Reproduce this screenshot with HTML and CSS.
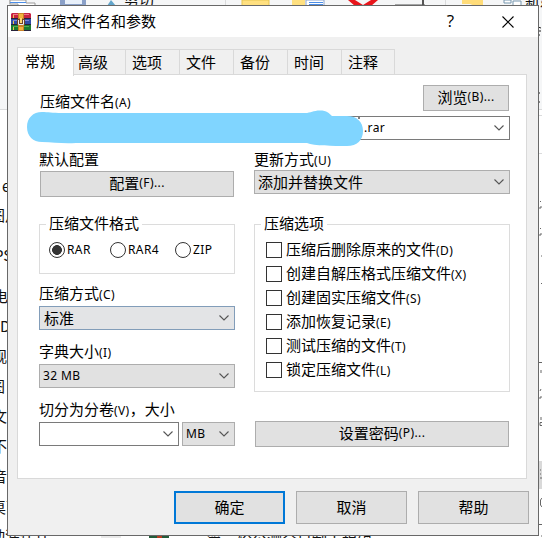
FILE: index.html
```html
<!DOCTYPE html>
<html lang="zh-CN">
<head>
<meta charset="utf-8">
<title>压缩文件名和参数</title>
<link rel="stylesheet" href="styles.css">
</head>
<body>
<svg class="desktop" width="542" height="538" viewBox="0 0 542 538">
  <rect width="542" height="538" fill="#fff"/>
  <rect width="542" height="109" fill="#f5f6f7"/>
  <path d="M0 109.500H8M538 109.500H542M538 115.500H542M538 153.500H542" stroke="#dadbdc"/>
  <path d="M9.500 0V6M225.500 0V6M445.500 0V6" stroke="#dadbdc"/>
  <path d="M10 0H26V3H35V6H18V4H10Z" fill="#fff" stroke="#999"/>
  <path d="M10 2.500H26" stroke="#4b8ee8"/>
  <path d="M60 0H86V6H60Z" fill="#8aa0c8"/><path d="M65 0H82V4H65Z" fill="#e8f0fa"/>
  <path d="M111 0L107 6H116Z" fill="#62a5cb"/>
  <path d="M242 0H269V6H242Z" fill="#ffe080" stroke="#e8c550"/>
  <path d="M292 0H305V6H292Z" fill="#ffe080"/><path d="M306 0H324V6H306Z" fill="#fff" stroke="#8aa4cf"/><path d="M309 2.500H323M309 4.500H323" stroke="#4b8ee8"/>
  <path d="M348 0L355 6H371L378 0H371L363 5L355 0Z" fill="#e8151b"/>
  <path d="M423 0V5M395 5.500H425" stroke="#555" stroke-width="2"/>
  <path d="M462 0H483V6H475L470 4H462Z" fill="#ffdc79"/>
  <path d="M504 0H511V3H504ZM513 1H521V6H513Z" fill="#fff" stroke="#7797af"/>
  <g class="behind">
    <text x="124" y="5">剪切</text><text x="525" y="6">新建</text>
    <text x="2" y="192">e</text><text x="-10" y="221">图片</text><text x="-6" y="261">PS</text>
    <text x="-7" y="302">电</text><text x="0" y="332">D</text><text x="-8" y="362">观</text>
    <text x="-10" y="392">图</text><text x="-8" y="422">文</text><text x="-8" y="452">不</text>
    <text x="-8" y="482">音</text><text x="-9" y="513">桌面</text><text x="-10" y="542">动漏作计</text>
    <text x="207" y="545">第二轮公测全日制工程硕</text>
  </g>
  <path d="M101 536H121V538H101Z" fill="#e9e9e9"/>
  <path d="M149 535H169V538H149Z" fill="#235b39"/><path d="M157 535H162V538H157Z" fill="#b93c21"/>
  <path d="M539 461H542V489H539Z" fill="#d9d9d9"/>
  <path d="M539 362.500H542M539 524.500H542" stroke="#666"/>
  <path d="M541 201L540 202M540 209V207H542M541 228L540 229M540 236V234H542M541 256H542M541 283.500H542M541 370V373M541 389L540 391M540 399V397H542M541 417V420M542 422.500H540V425.500H542M541 470H540M541 474H540M540 478H542M542 498L540.500 500V505L542 507M542 536H541" fill="none" stroke="#666"/>
  <path d="M538 27L541 28M539 31H541M539 35H540M538 93H540M538 102H540M8 43H7M8 50H7" stroke="#222"/>
</svg>

<main class="dialog">
  <header class="titlebar">
    <svg class="logo" width="20" height="18" viewBox="0 0 20 18">
      <path d="M0 1L1 0H19L20 1V6H0Z" fill="#c62342"/><path d="M0 6H20V12H0Z" fill="#304da6"/><path d="M0 12H20V17L19 18H1L0 17Z" fill="#1b7b30"/>
      <path d="M0 5.500H20M0 11.500H20M0 17.500H20" stroke="#27233b"/>
      <path d="M2 1.500H18" stroke="#ef738a"/><path d="M2 7.500H18" stroke="#7d86da"/><path d="M2 13.500H18" stroke="#50ae50"/>
      <path d="M2.500 2V5M2.500 8V11M2.500 14V17" stroke="#ecc34b"/>
      <path d="M7 0H13V18H7Z" fill="#c98226"/><path d="M8 1H12V5H8ZM8 14H12V17H8Z" fill="#f4b33e"/>
      <path d="M6 6H14V12H6Z" fill="#6d4429"/><path d="M7.500 7V11.500H12.500V7" fill="none" stroke="#eee"/><path d="M10 5V10" stroke="#ffd66c" stroke-width="2"/>
    </svg>
    <h1>压缩文件名和参数</h1>
    <span class="help">?</span>
    <svg class="close" width="12" height="12" viewBox="0 0 12 12"><path d="M.5.5L11.500 11.500M11.500.5L.5 11.500" stroke="#000" stroke-width="1.100"/></svg>
  </header>
  <nav class="tabs">
    <span class="tab active">常规</span><span class="tab first">高级</span><span class="tab">选项</span><span class="tab">文件</span><span class="tab">备份</span><span class="tab">时间</span><span class="tab last">注释</span>
  </nav>
  <section class="panel">
    <div class="name-row"><span>压缩文件名<small>(A)</small></span><button class="browse">浏览<small>(B)...</small></button></div>
    <div class="combo name-combo"><small>.rar</small><svg class="chev" width="10" height="6" viewBox="0 0 10 6"><path d="M.5.5L5 5L9.500.5"/></svg>
      <svg class="scribble" width="340" height="40" viewBox="25 108 340 40"><path d="M359 117V119" stroke="#000"/><path d="M42 112C48 112 52 113 62 113H305C311 113 313 110.500 320 110.500C327 110.500 329 113 332 116H347C357 116 363 122 363 131C363 140 357 146 347 146C333 146 314 146 307 143H76C62 144 54 142 42 142C33 142 27 136 27 127C27 118 33 112 42 112Z" fill="#80d5ff"/></svg>
    </div>
    <div class="columns">
      <div class="left">
        <label class="label">默认配置</label>
        <button class="profile">配置<small>(F)...</small></button>
        <fieldset class="formats"><legend>压缩文件格式</legend>
          <div class="radios">
            <label><i class="radio on"></i><small>RAR</small></label>
            <label><i class="radio"></i><small>RAR4</small></label>
            <label><i class="radio"></i><small>ZIP</small></label>
          </div>
        </fieldset>
        <label class="label method">压缩方式<small>(C)</small></label>
        <div class="combo grey focus">标准<svg class="chev" width="10" height="6" viewBox="0 0 10 6"><path d="M.5.5L5 5L9.500.5"/></svg></div>
        <label class="label dict">字典大小<small>(I)</small></label>
        <div class="combo grey"><small>32 MB</small><svg class="chev" width="10" height="6" viewBox="0 0 10 6"><path d="M.5.5L5 5L9.500.5"/></svg></div>
        <label class="label split">切分为分卷<small>(V)</small>，大小</label>
        <div class="volume">
          <div class="combo size"><svg class="chev" width="10" height="6" viewBox="0 0 10 6"><path d="M.5.5L5 5L9.500.5"/></svg></div>
          <div class="combo grey unit"><small>MB</small><svg class="chev" width="10" height="6" viewBox="0 0 10 6"><path d="M.5.5L5 5L9.500.5"/></svg></div>
        </div>
      </div>
      <div class="right">
        <label class="label">更新方式<small>(U)</small></label>
        <div class="combo grey update">添加并替换文件<svg class="chev" width="10" height="6" viewBox="0 0 10 6"><path d="M.5.5L5 5L9.500.5"/></svg></div>
        <fieldset class="options"><legend>压缩选项</legend>
          <label><i class="box"></i><span>压缩后删除原来的文件<small>(D)</small></span></label>
          <label><i class="box"></i><span>创建自解压格式压缩文件<small>(X)</small></span></label>
          <label><i class="box"></i><span>创建固实压缩文件<small>(S)</small></span></label>
          <label><i class="box"></i><span>添加恢复记录<small>(E)</small></span></label>
          <label><i class="box"></i><span>测试压缩的文件<small>(T)</small></span></label>
          <label><i class="box"></i><span>锁定压缩文件<small>(L)</small></span></label>
        </fieldset>
        <button class="password">设置密码<small>(P)...</small></button>
      </div>
    </div>
  </section>
  <footer class="actions"><button class="default">确定</button><button>取消</button><button>帮助</button></footer>
</main>
</body>
</html>
```

FILE: styles.css
```css
* { box-sizing: border-box; }
body {
  margin: 0;
  width: 542px;
  height: 538px;
  overflow: hidden;
  position: relative;
  font: 15px/20px "Noto Sans CJK SC", sans-serif;
  color: #000;
}
small { font: 12px/20px "Noto Sans", sans-serif; letter-spacing: .4px; }
.desktop { position: absolute; left: 0; top: 0; }
.behind { font: 15px "Noto Sans CJK SC", sans-serif; fill: #111; }
.dialog {
  position: absolute;
  left: 7px;
  top: 5px;
  width: 532px;
  height: 531px;
  border: 1px solid #686868;
  background: #f0f0f0;
}
.titlebar {
  height: 31px;
  display: flex;
  align-items: center;
  background: #fff;
  padding: 0 24px 0 3px;
}
.logo { margin-right: 5px; }
h1 { margin: 0; padding-bottom: 1px; font: inherit; flex: 1; }
.help { font: 17px/20px "Open Sans", sans-serif; margin: -2px 48px 0 0; }
.tabs { display: flex; align-items: flex-end; height: 38px; padding-left: 9px; }
.tab {
  width: 54px;
  height: 26px;
  border: 1px solid #d9d9d9;
  border-width: 1px 1px 0 0;
  padding: 2px 0 0 6px;
}
.tab.first { width: 52px; padding-left: 4px; }
.tab.last { width: 53px; }
.tab.active {
  width: 57px;
  height: 29px;
  background: #fff;
  border-left-width: 1px;
  padding: 3px 0 0 7px;
  margin-bottom: -1px;
  position: relative;
  z-index: 1;
}
.panel {
  width: 510px;
  height: 405px;
  margin: -1px 0 0 9px;
  background: #fff;
  border: 1px solid #d9d9d9;
  padding: 10px 16px 0 21px;
}
.name-row { display: flex; justify-content: space-between; height: 31px; padding-left: 1px; }
.name-row > span { padding-top: 6px; }
button {
  display: flex;
  align-items: center;
  justify-content: center;
  height: 26px;
  padding: 0 0 2px;
  border: 1px solid #adadad;
  background: #e1e1e1;
  color: #000;
  font: inherit;
}
.browse { width: 86px; margin-right: 1px; }
.combo {
  position: relative;
  display: flex;
  align-items: center;
  justify-content: space-between;
  height: 24px;
  border: 1px solid #7a7a7a;
  background: #fff;
  padding: 0 5px 0 3px;
}
.combo.grey { background: #e1e1e1; border-color: #adadad; }
.combo.grey.focus { background: #e3e4e6; border-color: #829db9; padding-left: 4px; }
.chev { fill: none; stroke: #555; stroke-width: 1.1; margin-left: auto; }
.name-combo { padding-left: 324px; }
.scribble { position: absolute; left: -15px; top: -9px; }
.columns { display: grid; grid-template-columns: 196px 256px; gap: 19px; padding-top: 9px; }
.label { display: block; height: 20px; white-space: nowrap; }
.profile { width: 194px; margin: 2px 0 0 1px; }
fieldset {
  position: relative;
  margin: 0;
  padding: 0;
  border: 1px solid #dcdcdc;
}
legend { position: absolute; left: 6px; top: -12px; padding: 0 3px; background: #fff; white-space: nowrap; }
.formats { height: 50px; margin-top: 27px; }
.radios { display: grid; grid-template-columns: 61px 65px auto; padding: 15px 0 0 9px; }
.radios label { display: flex; align-items: center; gap: 2px; height: 20px; }
.radio { width: 16px; height: 16px; border: 1px solid #333; border-radius: 50%; background: #fff; }
.radio.on { background: radial-gradient(circle, #333 0 4.6px, #fff 5.2px); }
.method { margin: 9px 0 3px; }
.dict { margin: 11px 0 3px; }
.split { margin: 11px 0 3px; }
.volume { display: flex; gap: 3px; }
.size { width: 140px; }
.unit { width: 53px; }
.update { margin-top: 1px; }
.update, .focus { line-height: 18px; padding-bottom: 1px; }
.options { height: 168px; margin-top: 30px; padding: 13px 0 0 11px; }
.options label { display: flex; align-items: center; height: 24px; white-space: nowrap; }
.options span { padding-bottom: 1px; }
.box { width: 16px; height: 16px; border: 1px solid #333; background: #fff; margin-right: 4px; }
.password { width: 254px; margin: 29px 0 0 1px; }
.actions { display: flex; gap: 11px; padding: 12px 0 0 166px; }
.actions button { width: 111px; height: 33px; }
.actions .default { border: 2px solid #0078d7; }
```
